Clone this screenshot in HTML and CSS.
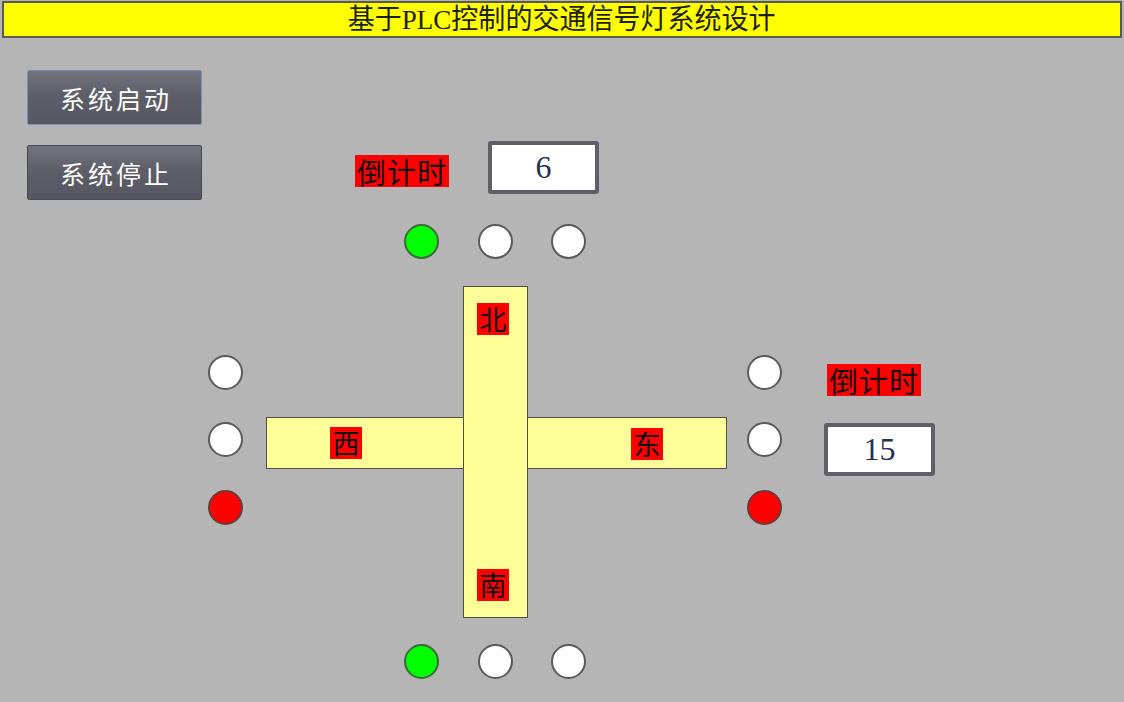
FILE: index.html
```html
<!DOCTYPE html>
<html lang="zh-CN">
<head>
<meta charset="utf-8">
<title>基于PLC控制的交通信号灯系统设计</title>
<link rel="stylesheet" href="styles.css">
</head>
<body>
<div class="screen">
  <header class="title-bar"><span class="title-text">基于PLC控制的交通信号灯系统设计</span></header>

  <main class="canvas">
    <div class="controls">
      <button class="btn btn-start">系统启动</button>
      <button class="btn">系统停止</button>
    </div>

    <!-- north/south countdown -->
    <div class="tag tag-ns">倒计时</div>
    <div class="counter counter-ns">6</div>

    <!-- east/west countdown -->
    <div class="tag tag-ew">倒计时</div>
    <div class="counter counter-ew">15</div>

    <!-- roads: horizontal first, vertical drawn over it -->
    <div class="road road-h">
      <span class="dir dir-w">西</span>
      <span class="dir dir-e">东</span>
    </div>
    <div class="road road-v">
      <span class="dir dir-n">北</span>
      <span class="dir dir-s">南</span>
    </div>

    <!-- signal heads -->
    <div class="lights lights-row lights-top">
      <span class="lamp green"></span><span class="lamp"></span><span class="lamp"></span>
    </div>
    <div class="lights lights-row lights-bottom">
      <span class="lamp green"></span><span class="lamp"></span><span class="lamp"></span>
    </div>
    <div class="lights lights-col lights-left">
      <span class="lamp"></span><span class="lamp"></span><span class="lamp red"></span>
    </div>
    <div class="lights lights-col lights-right">
      <span class="lamp"></span><span class="lamp"></span><span class="lamp red"></span>
    </div>
  </main>
</div>
</body>
</html>
```

FILE: styles.css
```css
html, body {
  margin: 0;
  padding: 0;
  background: #b5b5b5;
}

.screen {
  width: 1124px;
  height: 702px;
  display: flex;
  flex-direction: column;
  font-family: "Liberation Serif", "Noto Sans CJK SC", serif;
}

.title-bar {
  margin: 1px 2px 0 2px;
  height: 33px;
  background: #ffff00;
  border: 2px solid #5a5a50;
  display: flex;
  align-items: center;
  justify-content: center;
  overflow: hidden;
}

.title-text {
  display: inline-block;
  font-size: 28px;
  line-height: 1;
  color: #1e1e00;
  transform: scaleX(0.965);
  white-space: nowrap;
}

.canvas {
  position: relative;
  flex: 1;
}

/* control buttons */
.controls {
  position: absolute;
  left: 27px;
  top: 32px;
  display: flex;
  flex-direction: column;
  gap: 20px;
}

.btn {
  width: 175px;
  height: 55px;
  padding: 0;
  border: 1px solid #4a4a52;
  border-radius: 2px;
  background: linear-gradient(#74747e, #5e5e68 45%, #575761);
  color: #ffffff;
  font-family: "Noto Sans CJK SC", sans-serif;
  font-size: 25px;
  letter-spacing: 3px;
  text-indent: 3px;
  box-sizing: border-box;
}

.btn-start {
  border-color: #7a90b4;
}

/* countdown labels and displays */
.tag {
  position: absolute;
  height: 32px;
  padding: 0 2px;
  background: #ff0000;
  color: #111;
  font-family: "Noto Sans CJK SC", sans-serif;
  font-size: 29px;
  line-height: 32px;
  letter-spacing: 1px;
}

.tag-ns { left: 355px; top: 117px; }
.tag-ew { left: 827px; top: 326px; }

.counter {
  position: absolute;
  width: 111px;
  height: 53px;
  box-sizing: border-box;
  border: 4px solid #5f5f6b;
  border-radius: 3px;
  background: #ffffff;
  color: #2a3050;
  font-family: "Liberation Serif", serif;
  font-size: 32px;
  display: flex;
  align-items: center;
  justify-content: center;
}

.counter-ns { left: 488px; top: 103px; }
.counter-ew { left: 824px; top: 385px; }

/* crossroads */
.road {
  position: absolute;
  background: #ffff99;
  border: 1.5px solid #505048;
  box-sizing: border-box;
}

.road-h {
  left: 266px;
  top: 379px;
  width: 461px;
  height: 52px;
}

.road-v {
  left: 463px;
  top: 248px;
  width: 65px;
  height: 332px;
}

.dir {
  position: absolute;
  width: 32px;
  height: 32px;
  background: #ff0000;
  color: #111;
  font-family: "Noto Sans CJK SC", sans-serif;
  font-size: 27px;
  line-height: 32px;
  text-align: center;
}

.dir-w { left: 63px; top: 9px; }
.dir-e { left: 364px; top: 10px; }
.dir-n { left: 13px; top: 16px; }
.dir-s { left: 13px; top: 282px; }

/* signal lamps */
.lights {
  position: absolute;
  display: flex;
}

.lights-row { gap: 38.5px; }
.lights-col { flex-direction: column; gap: 32.5px; }

.lights-top    { left: 404px; top: 185.5px; }
.lights-bottom { left: 404px; top: 605.5px; }
.lights-left   { left: 208px; top: 316.5px; }
.lights-right  { left: 747px; top: 316.5px; }

.lamp {
  width: 35px;
  height: 35px;
  box-sizing: border-box;
  border-radius: 50%;
  border: 2px solid #5a5a5a;
  background: #ffffff;
}

.lamp.green { background: #00ff00; border-color: #3a6a3a; }
.lamp.red { background: #ff0000; border-color: #6a3a3a; }
```
